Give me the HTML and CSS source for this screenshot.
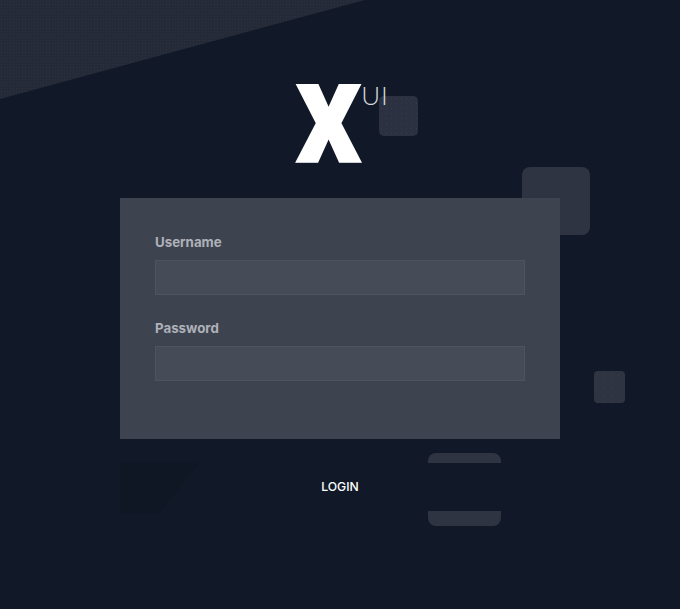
FILE: index.html
```html
<!DOCTYPE html>
<html lang="en">
<head>
<meta charset="utf-8">
<title>XUI Login</title>
<link rel="stylesheet" href="styles.css">
</head>
<body>
<div class="decor" aria-hidden="true">
  <div class="wedge"></div>
  <div class="sq sq-logo"></div>
  <div class="sq sq-card"></div>
  <div class="sq sq-right"></div>
  <div class="sq sq-low"></div>
  <div class="low-mask"></div>
  <div class="dark-shape"></div>
</div>
<main class="page">
  <div class="logo"><span class="logo-x">X</span><span class="logo-ui">UI</span></div>
  <form class="card">
    <div class="field">
      <label class="label" for="u">Username</label>
      <input class="input" id="u" type="text">
    </div>
    <div class="field">
      <label class="label" for="p">Password</label>
      <input class="input" id="p" type="password">
    </div>
  </form>
  <button class="login" type="button">LOGIN</button>
</main>
</body>
</html>
```
FILE: styles.css
```css
* { box-sizing: border-box; }
html, body { height: 100%; }
body {
  margin: 0;
  background: #111928;
  font-family: Inter, "Noto Sans", sans-serif;
  overflow: hidden;
  position: relative;
}
.decor { position: absolute; inset: 0; overflow: hidden; }
.wedge {
  position: absolute; left: 0; top: 0; width: 365px; height: 99px;
  clip-path: polygon(0 0, 100% 0, 0 100%);
  background:
    radial-gradient(circle, rgba(255,255,255,.035) .6px, transparent .8px) 0 0/3px 3px,
    #242a38;
}
.sq { position: absolute; background: #2e3441; }
.sq-logo {
  left: 379px; top: 96px; width: 39px; height: 40px; border-radius: 5px;
  background:
    radial-gradient(circle, rgba(255,255,255,.05) .6px, transparent .8px) 0 0/5px 5px,
    #2b3140;
}
.sq-card { left: 522px; top: 167px; width: 68px; height: 68px; border-radius: 8px; }
.sq-right {
  left: 594px; top: 371px; width: 31px; height: 32px; border-radius: 4px;
  background:
    radial-gradient(circle, rgba(255,255,255,.06) .6px, transparent .8px) 0 0/7px 7px,
    #2e3441;
}
.sq-low { left: 428px; top: 453px; width: 73px; height: 73px; border-radius: 8px; }
.low-mask { position: absolute; left: 420px; top: 463px; width: 90px; height: 48px; background: #111928; }
.dark-shape {
  position: absolute; left: 120px; top: 463px; width: 79px; height: 50px;
  background: #101724;
  clip-path: polygon(0 0, 100% 0, 50% 100%, 0 100%);
}
.page {
  position: relative;
  display: flex; flex-direction: column; align-items: center;
  padding-top: 85px;
}
.logo { display: flex; align-items: flex-start; height: 113px; margin-left: 1px; }
.logo-x {
  font-family: Roboto, sans-serif; font-weight: 900; font-size: 105px;
  line-height: 81px; height: 78px; color: #fff;
  -webkit-text-stroke: 3.5px #fff;
  width: 68px; text-align: center;
  transform: scaleX(.92);
  transform-origin: 100% 50%;
}
.logo-ui {
  font-family: Lato, sans-serif; font-weight: 300; font-size: 26px;
  line-height: 20px; color: #d5d7dc; letter-spacing: 1px; margin-left: 1px;
}
.card {
  width: 440px; height: 241px; background: #3e444f;
  padding: 35px 35px 0;
  display: flex; flex-direction: column; gap: 24px;
}
.field { display: flex; flex-direction: column; gap: 9px; }
.label {
  font-size: 13.3px; font-weight: 700; line-height: 18px; color: #aeb1b9;
}
.input {
  width: 100%; height: 35px; background: #464c57;
  border: 1px solid #4e535e; outline: 0; padding: 0 8px;
  color: #fff;
}
.login {
  margin-top: 39px; background: none; border: 0; padding: 0;
  font-family: Inter, sans-serif; font-size: 12.2px; font-weight: 500;
  line-height: 18px; color: #fff;
}
```
